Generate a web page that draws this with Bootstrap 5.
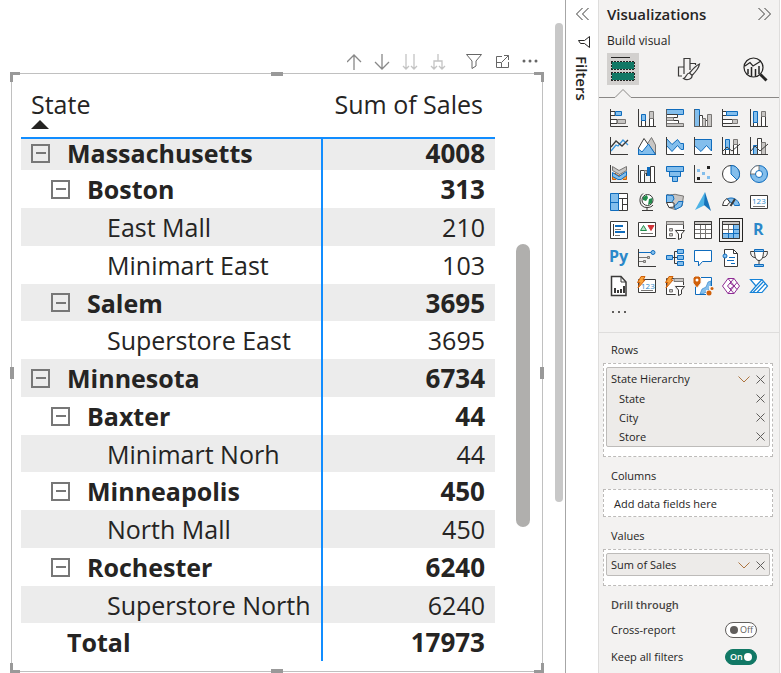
<!DOCTYPE html>
<html lang="en">
<head>
<meta charset="utf-8">
<meta name="viewport" content="width=device-width, initial-scale=1">
<title>Sales matrix</title>
<link rel="stylesheet" href="https://cdn.jsdelivr.net/npm/bootstrap@5.3.0/dist/css/bootstrap.min.css">
<style>
body{font-family:"Open Sans","Noto Sans",sans-serif;font-size:11px;line-height:16px;color:#252423;background:#fff}
svg{display:block;flex:none}
.plain{background:none;border:0;padding:0;color:inherit;font:inherit}
.canvas{padding:53px 2px 1px 11px}
.tools{height:20px;padding-right:4px;color:#888}
.tools .faint{color:#c4c4c4}
.visual{border:1px solid #c0c0c0;padding:12px 12px 10px 9px}
.grip{position:absolute;width:12px;height:4px;background:#999}
.grip.top{top:-2px;left:calc(50% - 6px)}
.grip.bottom{bottom:-2px;left:calc(50% - 6px)}
.grip.start,.grip.end{width:4px;height:12px;top:calc(50% - 6px)}
.grip.start{left:-2px}
.grip.end{right:-2px}
.corner{position:absolute;width:10px;height:10px;border:0 solid #999}
.corner.tl{top:-2px;left:-2px;border-width:3px 0 0 3px}
.corner.tr{top:-2px;right:-2px;border-width:3px 3px 0 0}
.corner.bl{bottom:-2px;left:-2px;border-width:0 0 3px 3px}
.corner.br{bottom:-2px;right:-2px;border-width:0 3px 3px 0}
.matrix{font-size:25px;line-height:32px}
.matrix{border-collapse:separate;border-spacing:0}
.matrix th,.matrix td{padding:0 10px;font-weight:400;white-space:nowrap;height:38px;vertical-align:middle}
.matrix thead th{height:53px;border-bottom:2px solid #118dff;vertical-align:top;padding-top:2px;padding-right:12px}
.matrix tbody th{width:302px;border-right:2px solid #118dff}
.matrix tbody tr:nth-child(4n+1)>*{height:37px}
.matrix tbody tr:first-child>*{height:31px;line-height:28px;vertical-align:top}
.matrix tbody tr:nth-child(odd)>*{background:#ececec}
.matrix .strong>*{font-weight:700}
.matrix .strong>td{font-size:26px}
.matrix .city th{padding-left:30px}
.matrix .store th{padding-left:86px}
.matrix .sum th{padding-left:46px}
.toggle{width:19px;height:19px;border:2px solid #777;display:flex;align-items:center;justify-content:center}
.toggle::before{content:"";width:10px;height:2px;background:#777}
.gap-name{gap:17px}
.thumb{width:14px;height:283px;margin:158px 0 0 21px;border-radius:7px;background:#b0afad}
.page-thumb{width:8px;height:479px;margin:-30px 0 0 12px;border-radius:4px;background:#c8c8c8}
.filters{width:33px;border-left:1px solid #a6a6a6;padding-top:8px}
.filters .name{writing-mode:vertical-rl;font-size:15px;font-weight:600;line-height:20px}
.viz{width:182px;margin-right:1px;background:#f3f2f1;border:solid #dedddc;border-width:0 1px}
.viz h1{font-size:15px;line-height:20px;font-weight:600}
.viz h2{font-size:12px;line-height:18px;font-weight:500}
.modes{padding:3px 8px 4px}
.mode{width:32px;height:32px;display:flex;align-items:center;justify-content:center}
.mode.active{background:#d2d0ce}
.gallery{display:grid;grid-template-columns:repeat(6,28px);grid-auto-rows:28px;padding:6px 6px 4px}
.gallery button{display:flex;align-items:center;justify-content:center;width:28px;height:28px}
.gallery .picked{outline:1px solid #252423;outline-offset:-3px}
.gallery svg{fill:none;stroke:#3b3a39;overflow:visible}
.gallery svg text{stroke:none;fill:#2b88c9}
.script{font-size:16px;font-weight:700}
.digits{font-size:8px}
.b{fill:#83beec;stroke:#0f6cbd}
.w{fill:#fff}
.g{fill:#c8c6c4;stroke:#797775}
.l{stroke:#0f6cbd}
.o{fill:#f7a23b;stroke:#d0600a}
.wells{border-top:1px solid #dedddc;padding:9px 6px 0 4px}
.wells h3{font-size:11px;line-height:16px;font-weight:400;padding-left:8px;margin:0 0 5px}
.well{border:1px dashed #bdbbb9;background:#fff;padding:3px 2px 9px;margin-bottom:11px}
.well.open{padding:6px 10px 4px}
.pill{border:1px solid #bdbbb9;border-radius:2px;background:#edebe9;padding:3px 4px 2px}
.pill.tree{padding-bottom:0}
.pill.tree ul{padding-top:2px}
.pill li{height:19px;padding-left:8px}
.chev{margin-right:6px}
.drill{color:#484644}
.option{margin-top:9px}
.option+.option{margin-top:11px}
.switch{width:32px;height:16px}
.switch input{appearance:none;width:32px;height:16px;margin:0;display:block;border:1px solid #605e5c;border-radius:8px;background:#fff}
.switch input:checked{background:#117865;border-color:#117865}
.switch span{position:absolute;top:0;left:15px;font-size:9px;line-height:16px;color:#605e5c}
.switch::after{content:"";position:absolute;top:4px;left:5px;width:8px;height:8px;border-radius:4px;background:#605e5c}
.switch.on span{left:5px;color:#fff;font-weight:600}
.switch.on::after{left:19px;background:#fff}
</style>
<script src="https://cdn.jsdelivr.net/npm/bootstrap@5.3.0/dist/js/bootstrap.bundle.min.js"></script>
</head>
<body>
<div class="d-flex min-vh-100">
<main class="canvas d-flex flex-grow-1 align-items-stretch">
  <div class="flex-grow-1 d-flex flex-column">
    <div class="tools d-flex justify-content-end">
      <svg width="192" height="18" viewBox="0 0 192 18" fill="none" stroke="currentColor" role="img" aria-label="Visual actions">
        <path stroke-width="1.300" d="M7 17V2M0 9L7 2L14 9M35 1V16M28 9L35 16L42 9"/>
        <g class="faint" stroke="currentColor"><path stroke-width="1.300" d="M59 1V16M56 13L59 16L62 13M67 1V16M64 13L67 16L70 13M91 1V8M87 16V8H95V16M84 13L87 16L90 13M92 13L95 16L98 13"/></g>
        <path stroke="#666" d="M119.500 1.500H134.500L129 8V13L125 15.500V8Z"/>
        <path stroke="#666" d="M155 3.500H149.500V14.500H161.500V9M149.500 9.500H154.500V14.500M155 9L161.500 2.500M157 2.500H161.500V7"/>
        <g fill="#666" stroke="none"><circle cx="177" cy="8" r="1.500"/><circle cx="183" cy="8" r="1.500"/><circle cx="189" cy="8" r="1.500"/></g>
      </svg>
    </div>
    <section class="visual position-relative d-flex flex-grow-1 align-items-start">
      <i class="corner tl"></i><i class="corner tr"></i><i class="corner bl"></i><i class="corner br"></i>
      <i class="grip top"></i><i class="grip bottom"></i><i class="grip start"></i><i class="grip end"></i>
      <table class="matrix flex-grow-1">
        <thead><tr>
          <th scope="col">State<svg width="18" height="9" viewBox="0 0 18 9"><path fill="#252423" d="M0 9L9 0L18 9Z"/></svg></th>
          <th scope="col" class="text-end">Sum of Sales</th>
        </tr></thead>
        <tbody>
          <tr class="strong"><th scope="row"><div class="d-flex align-items-center gap-name"><button class="toggle plain" aria-label="Collapse Massachusetts"></button>Massachusetts</div></th><td class="text-end">4008</td></tr>
          <tr class="strong city"><th scope="row"><div class="d-flex align-items-center gap-name"><button class="toggle plain" aria-label="Collapse Boston"></button>Boston</div></th><td class="text-end">313</td></tr>
          <tr class="store"><th scope="row">East Mall</th><td class="text-end">210</td></tr>
          <tr class="store"><th scope="row">Minimart East</th><td class="text-end">103</td></tr>
          <tr class="strong city"><th scope="row"><div class="d-flex align-items-center gap-name"><button class="toggle plain" aria-label="Collapse Salem"></button>Salem</div></th><td class="text-end">3695</td></tr>
          <tr class="store"><th scope="row">Superstore East</th><td class="text-end">3695</td></tr>
          <tr class="strong"><th scope="row"><div class="d-flex align-items-center gap-name"><button class="toggle plain" aria-label="Collapse Minnesota"></button>Minnesota</div></th><td class="text-end">6734</td></tr>
          <tr class="strong city"><th scope="row"><div class="d-flex align-items-center gap-name"><button class="toggle plain" aria-label="Collapse Baxter"></button>Baxter</div></th><td class="text-end">44</td></tr>
          <tr class="store"><th scope="row">Minimart Norh</th><td class="text-end">44</td></tr>
          <tr class="strong city"><th scope="row"><div class="d-flex align-items-center gap-name"><button class="toggle plain" aria-label="Collapse Minneapolis"></button>Minneapolis</div></th><td class="text-end">450</td></tr>
          <tr class="store"><th scope="row">North Mall</th><td class="text-end">450</td></tr>
          <tr class="strong city"><th scope="row"><div class="d-flex align-items-center gap-name"><button class="toggle plain" aria-label="Collapse Rochester"></button>Rochester</div></th><td class="text-end">6240</td></tr>
          <tr class="store"><th scope="row">Superstore North</th><td class="text-end">6240</td></tr>
          <tr class="strong sum"><th scope="row">Total</th><td class="text-end">17973</td></tr>
        </tbody>
      </table>
      <div class="thumb"></div>
    </section>
  </div>
  <div class="page-thumb"></div>
</main>

<aside class="filters d-flex flex-column align-items-center flex-shrink-0">
  <button class="plain" aria-label="Expand filters"><svg width="13" height="12" viewBox="0 0 13 12" fill="none" stroke="#3b3a39"><path d="M6.500 0L.500 6L6.500 12M12.500 0L6.500 6L12.500 12"/></svg></button>
  <svg class="mt-3 ms-1" width="12" height="12" viewBox="0 0 12 12" fill="none" stroke="#252423"><path d="M11.500 .500V11.500L6.500 7.500H2.500L.500 4.500H6.500Z"/></svg>
  <div class="name mt-2">Filters</div>
</aside>

<aside class="viz flex-shrink-0">
  <div class="d-flex align-items-center justify-content-between px-2 pt-1">
    <h1 class="m-0">Visualizations</h1>
    <button class="plain" aria-label="Collapse visualizations"><svg width="13" height="12" viewBox="0 0 13 12" fill="none" stroke="#3b3a39"><path d="M.500 0L6.500 6L.500 12M6.500 0L12.500 6L6.500 12"/></svg></button>
  </div>
  <h2 class="mx-2 mt-2 mb-0">Build visual</h2>
  <div class="modes d-flex justify-content-between">
    <button class="plain mode active" aria-label="Build visual"><svg width="24" height="24" viewBox="0 0 24 24"><path stroke="#252423" d="M0 .500H19"/><path fill="#117865" d="M1 5H23V12H1ZM1 16H23V23H1Z"/><path fill="none" stroke="#252423" stroke-dasharray="2 1" d="M0 4.500H24M0 12.500H24M0 15.500H24M0 23.500H24M.500 5V12M23.500 5V12M.500 16V23M23.500 16V23"/></svg></button>
    <button class="plain mode" aria-label="Format visual"><svg width="24" height="24" viewBox="0 0 24 24" fill="none" stroke="#3b3a39" stroke-width="1.200"><path d="M5 19H1.500V10H7M7 17V1.500H13V13M13 6.500H18.500V8M22.500 7C20 8 15 13 12.500 16L15 18.500C18 15.500 22 10.500 22.500 7ZM12.500 16C9 16 10 20 6.500 21.500C10 24 15.500 22 15 18.500"/></svg></button>
    <button class="plain mode" aria-label="Analytics"><svg width="25" height="25" viewBox="0 0 25 25" fill="none" stroke="#252423" stroke-width="1.200"><circle cx="10.500" cy="10.500" r="9.500"/><path d="M2 9L7 5.500L10 9L18 4"/><path stroke-width="1.500" d="M5 12V17M8.500 10V19M12.500 12V19M16 9V17"/><path stroke-width="3" d="M17.500 17.500L23.500 23.500"/></svg></button>
  </div>
  <svg width="180" height="9" viewBox="0 0 180 9"><path fill="none" stroke="#8a8886" d="M0 8.500H16L24 .500L32 8.500H180"/></svg>
  <div class="gallery">
    <button class="plain" aria-label="Stacked bar chart"><svg width="18" height="18"><path class="w" d="M.500 2.500H5V6.500H.500ZM.500 10.500H7V14.500H.500Z"/><path class="b" d="M5.500 2.500H11.500V6.500H5.500Z"/><path class="g" d="M7.500 10.500H15.500V14.500H7.500Z"/><path d="M.500 0V17.500H18"/></svg></button>
    <button class="plain" aria-label="Stacked column chart"><svg width="18" height="18"><path class="w" d="M3.500 11.500H7.500V17.500H3.500ZM11.500 8.500H15.500V17.500H11.500Z"/><path class="b" d="M3.500 5.500H7.500V11.500H3.500Z"/><path class="g" d="M11.500 2.500H15.500V9.500H11.500Z"/><path d="M.500 0V17.500H18"/></svg></button>
    <button class="plain" aria-label="Clustered bar chart"><svg width="18" height="18"><path class="b" d="M.500 .500H17.500V5.500H.500Z"/><path class="w" d="M.500 5.500H11.500V8.500H.500ZM.500 11.500H12.500V14.500H.500Z"/><path class="g" d="M.500 8.500H7.500V11.500H.500ZM.500 14.500H17.500V17.500H.500Z"/><path stroke="#605e5c" d="M.500 0V17.500H18"/></svg></button>
    <button class="plain" aria-label="Clustered column chart"><svg width="18" height="18"><path class="b" d="M.500 .500H5.500V17.500H.500Z"/><path class="w" d="M5.500 6.500H8.500V17.500H5.500ZM11.500 11.500H13.500V17.500H11.500Z"/><path class="g" d="M8.500 9.500H11.500V17.500H8.500ZM13.500 5.500H17.500V17.500H13.500Z"/><path stroke="#605e5c" d="M.500 0V17.500H18"/></svg></button>
    <button class="plain" aria-label="100% stacked bar chart"><svg width="18" height="18"><path class="w" d="M.500 2.500H4.500V6.500H.500ZM.500 10.500H10.500V14.500H.500Z"/><path class="b" d="M4.500 2.500H15.500V6.500H4.500Z"/><path class="g" d="M10.500 10.500H15.500V14.500H10.500Z"/><path d="M.500 0V17.500H18"/></svg></button>
    <button class="plain" aria-label="100% stacked column chart"><svg width="18" height="18"><path class="w" d="M3.500 13.500H7.500V17.500H3.500ZM11.500 7.500H15.500V17.500H11.500Z"/><path class="b" d="M3.500 2.500H7.500V13.500H3.500Z"/><path class="g" d="M11.500 2.500H15.500V7.500H11.500Z"/><path d="M.500 0V17.500H18"/></svg></button>

    <button class="plain" aria-label="Line chart"><svg width="18" height="18"><path stroke="#3a96dd" stroke-width="1.300" d="M1 14L6 8L8 9L13 3L18 8"/><path stroke-width="1.300" d="M1 10L6 4L12 9L18 3"/><path d="M.500 0V17.500H18"/></svg></button>
    <button class="plain" aria-label="Area chart"><svg width="18" height="18"><path class="g" d="M8 17V9L13.500 .500L17.500 8V17.500H8Z"/><path class="w" d="M.500 11L6 1.500L12 10L17.500 17.500H.500Z"/><path class="b" d="M.500 17.500V12L4 15L10.500 7L17.500 17.500Z"/></svg></button>
    <button class="plain" aria-label="Stacked area chart"><svg width="18" height="18"><path fill="#fff" stroke="none" d="M1 9L6 15L11 9L14 13L18 11V17H1Z"/><path class="b" d="M.500 1.500L6 7.500L11.500 2.500L14.500 6.500H17.500V12.500H15L11.500 8.500L6 14.500L.500 8.500Z"/><path d="M.500 0V17.500H18"/></svg></button>
    <button class="plain" aria-label="100% stacked area chart"><svg width="18" height="18"><path fill="#fff" stroke="none" d="M1 9H18V17H1Z"/><path class="b" d="M.500 2.500H17.500V14L12.500 8.500L7 14.500L.500 8.500Z"/><path d="M.500 0V17.500H18"/></svg></button>
    <button class="plain" aria-label="Line and stacked column chart"><svg width="18" height="18"><path class="w" d="M3.500 12.500H7.500V17.500H3.500ZM11.500 7.500H15.500V17.500H11.500Z"/><path class="b" d="M3.500 2.500H7.500V12.500H3.500Z"/><path class="g" d="M11.500 2.500H15.500V7.500H11.500Z"/><path d="M.500 0V17.500H18M1 14L5 10L10 14L18 7"/></svg></button>
    <button class="plain" aria-label="Line and clustered column chart"><svg width="18" height="18"><path class="b" d="M3.500 8.500H7.500V17.500H3.500Z"/><path class="w" d="M7.500 1.500H11.500V17.500H7.500Z"/><path class="g" d="M11.500 5.500H15.500V17.500H11.500Z"/><path d="M.500 0V17.500H18M1 14L5 9L10 14L18 7"/></svg></button>

    <button class="plain" aria-label="Ribbon chart"><svg width="18" height="18"><path fill="#f7a23b" stroke="#d0600a" d="M2.500 8.500H6L9.500 12L13 8.500H16.500V14.500H13L9.500 9.500L6 14.500H2.500Z"/><path class="b" d="M2.500 7.500L9 11.500L16.500 6.500V10.500L11 14.500H8L2.500 11.500Z"/><path class="g" d="M2.500 1.500L9 5.500L16.500 1.500V5.500L9.500 9.500L2.500 5.500Z"/><path d="M.500 0V17.500H18"/></svg></button>
    <button class="plain" aria-label="Waterfall chart"><svg width="18" height="18"><path class="w" d="M2.500 5.500H6.500V17.500H2.500ZM12.500 1.500H16.500V17.500H12.500Z"/><path class="g" d="M6.500 5.500H9V8.500H6.500Z"/><path fill="#0f6cbd" stroke="none" d="M9 2H12V11H9Z"/><path d="M.500 0V17.500H18M8.500 8V11"/></svg></button>
    <button class="plain" aria-label="Funnel chart"><svg width="18" height="18"><path class="b" d="M.500 1.500H17.500V6.500H.500ZM3.500 6.500H14.500V11.500H3.500ZM6.500 11.500H11.500V16.500H6.500Z"/></svg></button>
    <button class="plain" aria-label="Scatter chart"><svg width="18" height="18"><path fill="#83beec" stroke="none" d="M3 4H6V7H3ZM8 7H11V10H8ZM13 11H16V14H13Z"/><path fill="#252423" stroke="none" d="M13 1H16V4H13ZM3 12H6V15H3Z"/><path d="M.500 0V17.500H18"/></svg></button>
    <button class="plain" aria-label="Pie chart"><svg width="18" height="18"><circle class="w" cx="9" cy="9" r="8.500"/><path class="b" d="M9 .500A8.500 8.500 0 0 1 15 15L9 9Z"/></svg></button>
    <button class="plain" aria-label="Donut chart"><svg width="18" height="18"><circle class="b" cx="9" cy="9" r="8.500"/><path fill="#fff" stroke="#797775" d="M9 .500A8.500 8.500 0 0 0 .500 9H5.500L9 5.500Z"/><circle cx="9" cy="9" r="3.500" fill="#fff" stroke="#0f6cbd"/></svg></button>

    <button class="plain" aria-label="Treemap"><svg width="18" height="18"><path class="w" d="M8.500 .500H17.500V17.500H8.500ZM8.500 5.500H17.500M12.500 5.500V17.500M12.500 11.500H17.500"/><path class="b" d="M.500 .500H8.500V17.500H.500ZM.500 9.500H8.500"/></svg></button>
    <button class="plain" aria-label="Map"><svg width="18" height="18"><circle cx="9.500" cy="7" r="5.500" fill="#fff"/><path fill="#218c4b" stroke="none" d="M5 4L9 2L10 5L8 8L5 7ZM11 6L14.500 5L14 10L10 12Z"/><path d="M5 .500C0 4 1 15 9 14.500C12 14.500 14 13.500 15 12M9 14.500V17M4 17.500H15"/></svg></button>
    <button class="plain" aria-label="Filled map"><svg width="18" height="18"><path class="g" d="M1 1.500C5 3 8 0 12 2L17.500 3L16 13L9 16.500L3 14.500L1 10Z"/><path class="b" d="M.500 2L7 2.500L8 6L5.500 9.500H.500ZM12.500 8.500L17 8.500L15.500 13.500L9.500 16.500L8 13L11 11Z"/><path fill="#fff" stroke="#3b3a39" d="M5.500 9.500L8 10L8 14L3 14.500L.500 9.500Z"/></svg></button>
    <button class="plain" aria-label="Azure map"><svg width="18" height="18"><path fill="#4db3e6" stroke="none" d="M11 -1L1 17L11 12Z"/><path fill="#1673ba" stroke="none" d="M11 -1L17 18L10 12Z"/></svg></button>
    <button class="plain" aria-label="Gauge"><svg width="18" height="18"><path class="b" d="M5 6A8.500 8.500 0 0 1 17.500 12.500H12.500A3.500 3.500 0 0 0 9 9.500Z"/><path class="w" d="M.500 12.500A8.500 8.500 0 0 1 5 5.500L8 9.500A3.500 3.500 0 0 0 5.500 12.500Z"/><path stroke-width="2" d="M13 6L8.500 13"/></svg></button>
    <button class="plain" aria-label="Card"><svg width="18" height="18"><path class="w" d="M.500 2.500H17.500V15.500H.500Z"/><text class="digits" x="2" y="11">123</text><path stroke="#797775" d="M3 13.500H15"/></svg></button>

    <button class="plain" aria-label="Multi-row card"><svg width="18" height="18"><path class="w" d="M.500 .500H17.500V17.500H.500Z"/><path d="M3.500 3V15"/><path class="l" stroke-width="2" d="M5 5H13M5 11H15"/><path stroke="#797775" d="M5 8.500H11M5 14.500H10"/></svg></button>
    <button class="plain" aria-label="KPI"><svg width="18" height="18"><path class="w" d="M.500 1.500H17.500V15.500H.500Z"/><path fill="#bfe3cb" stroke="#218c4b" d="M2.500 9.500L5.500 4.500L8.500 9.500Z"/><path fill="#d13438" stroke="#d13438" d="M10 4.500H16L13 9.500Z"/><path stroke="#797775" d="M3 12.500H15"/></svg></button>
    <button class="plain" aria-label="Slicer"><svg width="18" height="18"><path class="w" d="M.500 .500H17.500V17.500H.500Z"/><path class="g" d="M.500 .500H17.500V3.500H.500ZM3.500 7.500H6.500V10H3.500ZM3.500 12.500H6.500V15H3.500Z"/><path stroke="none" fill="#f3f2f1" d="M8 8H19V19H10Z"/><path fill="#fff" d="M9.500 9.500H18.500L15.500 13V17L12.500 18.500V13Z"/></svg></button>
    <button class="plain" aria-label="Table"><svg width="18" height="18"><path class="w" d="M.500 .500H17.500V17.500H.500Z"/><path stroke="#797775" d="M6.500 4V17M11.500 4V17M1 8.500H17M1 12.500H17"/><path fill="#c8c6c4" d="M.500 .500H17.500V3.500H.500Z"/></svg></button>
    <button class="plain picked" aria-label="Matrix"><svg width="18" height="18"><path class="w" d="M.500 .500H17.500V17.500H.500Z"/><path fill="#83beec" stroke="none" d="M12 4H17V17H1V13H12Z"/><path stroke="#797775" d="M6.500 4V12M1 8.500H11"/><path class="l" d="M11.500 4V17M6.500 13V17M12 8.500H17M1 12.500H17"/><path fill="#c8c6c4" d="M.500 .500H17.500V3.500H.500Z"/><path d="M.500 .500H17.500V17.500H.500Z"/></svg></button>
    <button class="plain" aria-label="R visual"><svg width="18" height="18"><text class="script" x="3" y="14">R</text></svg></button>

    <button class="plain" aria-label="Python visual"><svg width="18" height="18"><text class="script" x="-1" y="13">Py</text></svg></button>
    <button class="plain" aria-label="Key influencers"><svg width="18" height="18"><path class="l" d="M1 3.500H13"/><path stroke="#797775" d="M1 8.500H9M1 12.500H5"/><circle class="b" cx="15" cy="3.500" r="2"/><path class="g" d="M9.500 7.500H11.500V9.500H9.500ZM5.500 11.500H7.500V13.500H5.500Z"/><path d="M.500 0V17.500H18"/></svg></button>
    <button class="plain" aria-label="Decomposition tree"><svg width="18" height="18"><path d="M6 8.500H12M12 2.500H8.500V14.500H12"/><path class="b" d="M.500 6.500H6.500V10.500H.500ZM11.500 .500H17.500V4.500H11.500ZM11.500 6.500H17.500V10.500H11.500ZM11.500 12.500H17.500V16.500H11.500Z"/></svg></button>
    <button class="plain" aria-label="Q&amp;A"><svg width="18" height="18"><path fill="#fff" stroke="#0f6cbd" d="M.500 1.500H17.500V12.500H8.500L4.500 17V12.500H.500Z"/></svg></button>
    <button class="plain" aria-label="Narrative"><svg width="18" height="18"><path class="w" d="M2.500 .500H11.500L15.500 4.500V17.500H2.500Z"/><path d="M11.500 .500V4.500H15.500"/><path class="l" d="M7 8.500H13M5 11.500H12M9 14.500H13"/><circle class="b" cx="3" cy="7" r="2"/></svg></button>
    <button class="plain" aria-label="Goals"><svg width="18" height="18"><path class="w" d="M4.500 1.500H13.500C13.500 8 12 11.500 9 11.500S4.500 8 4.500 1.500Z"/><path d="M4.500 2.500H.500C.500 6 2 8.500 5 8.500M13.500 2.500H17.500C17.500 6 16 8.500 13 8.500M9 11V15"/><path class="b" d="M4.500 .500H13.500V2.500H4.500ZM4.500 15.500H13.500V17.500H4.500Z"/></svg></button>

    <button class="plain" aria-label="Paginated report"><svg width="18" height="18"><path class="w" stroke-width="1.500" d="M1.500 -.500H11L16 5V18.500H1.500Z"/><path d="M11 0V5H16"/><path stroke-width="2" d="M5 16V11M8 16V13M11 16V12M14 16V9"/></svg></button>
    <button class="plain" aria-label="New card"><svg width="18" height="18"><path class="w" d="M.500 2.500H17.500V15.500H.500Z"/><text class="digits" x="3" y="12">123</text><path stroke="#797775" d="M3 13.500H15"/><path class="o" d="M3 -.500H7L5 3H7L0 11L2 5.500H-.500Z"/></svg></button>
    <button class="plain" aria-label="New slicer"><svg width="18" height="18"><path class="w" d="M.500 1.500H17.500V17.500H.500Z"/><path class="g" d="M8 1.500H17.500V4.500H8ZM3.500 12.500H6.500V15H3.500Z"/><path stroke="none" fill="#f3f2f1" d="M8 8H19V19H10Z"/><path fill="#fff" d="M9.500 9.500H18.500L15.500 13V17L12.500 18.500V13Z"/><path class="o" d="M3 -.500H7L5 3H7L0 11L2 5.500H-.500Z"/></svg></button>
    <button class="plain" aria-label="ArcGIS map"><svg width="18" height="18"><path fill="#fff" stroke="#0f6cbd" d="M1.500 .500H17.500V17.500H1.500Z"/><path class="b" stroke-width=".500" d="M14 5L17 4V9L14 14L9 17H6L8 12L12 10Z"/><path fill="#d0600a" stroke="#f3f2f1" d="M-1 1L1 -1H5L7 1V6L3 11L-1 6Z"/><circle cx="3" cy="3" r="1.500" fill="#fff" stroke="none"/><path stroke="none" fill="#f3f2f1" d="M12 13H15V9H20V19H12Z"/><circle cx="15" cy="16" r="2.500" fill="#d0600a" stroke="none"/><circle cx="18" cy="11.500" r="1.500" fill="#d0600a" stroke="none"/></svg></button>
    <button class="plain" aria-label="Power Apps"><svg width="18" height="18"><path fill="#fff" stroke="#8f2c94" d="M.500 9L6 1.500H12L17.500 9L12 16.500H6ZM6 1.500L15 12.500M6 16.500L15 5.500M12 1.500L8 6L12 9L8 12L12 16.500M8 6L5.500 9L8 12"/></svg></button>
    <button class="plain" aria-label="Power Automate"><svg width="18" height="18"><path fill="#fff" stroke="#1683d8" stroke-width="1.200" d="M.500 2.500H12L17.500 9L12 15.500H.500L6 9Z"/><path stroke="#1683d8" stroke-width="1.200" d="M6 9L12 2.500M3 15.500L13.500 4.500M7 15.500L15.500 6.500"/></svg></button>
    <button class="plain" aria-label="More visuals"><svg width="18" height="18"><path stroke="#605e5c" stroke-width="2" d="M2 7H4M8 7H10M14 7H16"/></svg></button>
  </div>

  <div class="wells">
    <h3>Rows</h3>
    <div class="well">
      <div class="pill tree">
        <div class="d-flex align-items-center"><span class="me-auto">State Hierarchy</span><svg class="chev" width="12" height="7" viewBox="0 0 12 7" fill="none" stroke="#ad7541"><path d="M.500 .500L6 6L11.500 .500"/></svg><svg width="9" height="9" viewBox="0 0 9 9" stroke="#605e5c"><path d="M.500 .500L8.500 8.500M8.500 .500L.500 8.500"/></svg></div>
        <ul class="list-unstyled m-0">
          <li class="d-flex align-items-center justify-content-between">State<svg width="9" height="9" viewBox="0 0 9 9" stroke="#605e5c"><path d="M.500 .500L8.500 8.500M8.500 .500L.500 8.500"/></svg></li>
          <li class="d-flex align-items-center justify-content-between">City<svg width="9" height="9" viewBox="0 0 9 9" stroke="#605e5c"><path d="M.500 .500L8.500 8.500M8.500 .500L.500 8.500"/></svg></li>
          <li class="d-flex align-items-center justify-content-between">Store<svg width="9" height="9" viewBox="0 0 9 9" stroke="#605e5c"><path d="M.500 .500L8.500 8.500M8.500 .500L.500 8.500"/></svg></li>
        </ul>
      </div>
    </div>
    <h3>Columns</h3>
    <div class="well open">Add data fields here</div>
    <h3>Values</h3>
    <div class="well">
      <div class="pill"><div class="d-flex align-items-center"><span class="me-auto">Sum of Sales</span><svg class="chev" width="12" height="7" viewBox="0 0 12 7" fill="none" stroke="#ad7541"><path d="M.500 .500L6 6L11.500 .500"/></svg><svg width="9" height="9" viewBox="0 0 9 9" stroke="#605e5c"><path d="M.500 .500L8.500 8.500M8.500 .500L.500 8.500"/></svg></div></div>
    </div>
    <div class="px-2">
      <div class="fw-semibold drill">Drill through</div>
      <div class="option d-flex justify-content-between align-items-center pe-2"><label for="cross">Cross-report</label><div class="switch position-relative"><input id="cross" type="checkbox" role="switch"><span>Off</span></div></div>
      <div class="option d-flex justify-content-between align-items-center pe-2"><label for="keep">Keep all filters</label><div class="switch on position-relative"><input id="keep" type="checkbox" role="switch" checked><span>On</span></div></div>
    </div>
  </div>
</aside>
</div>
</body>
</html>
